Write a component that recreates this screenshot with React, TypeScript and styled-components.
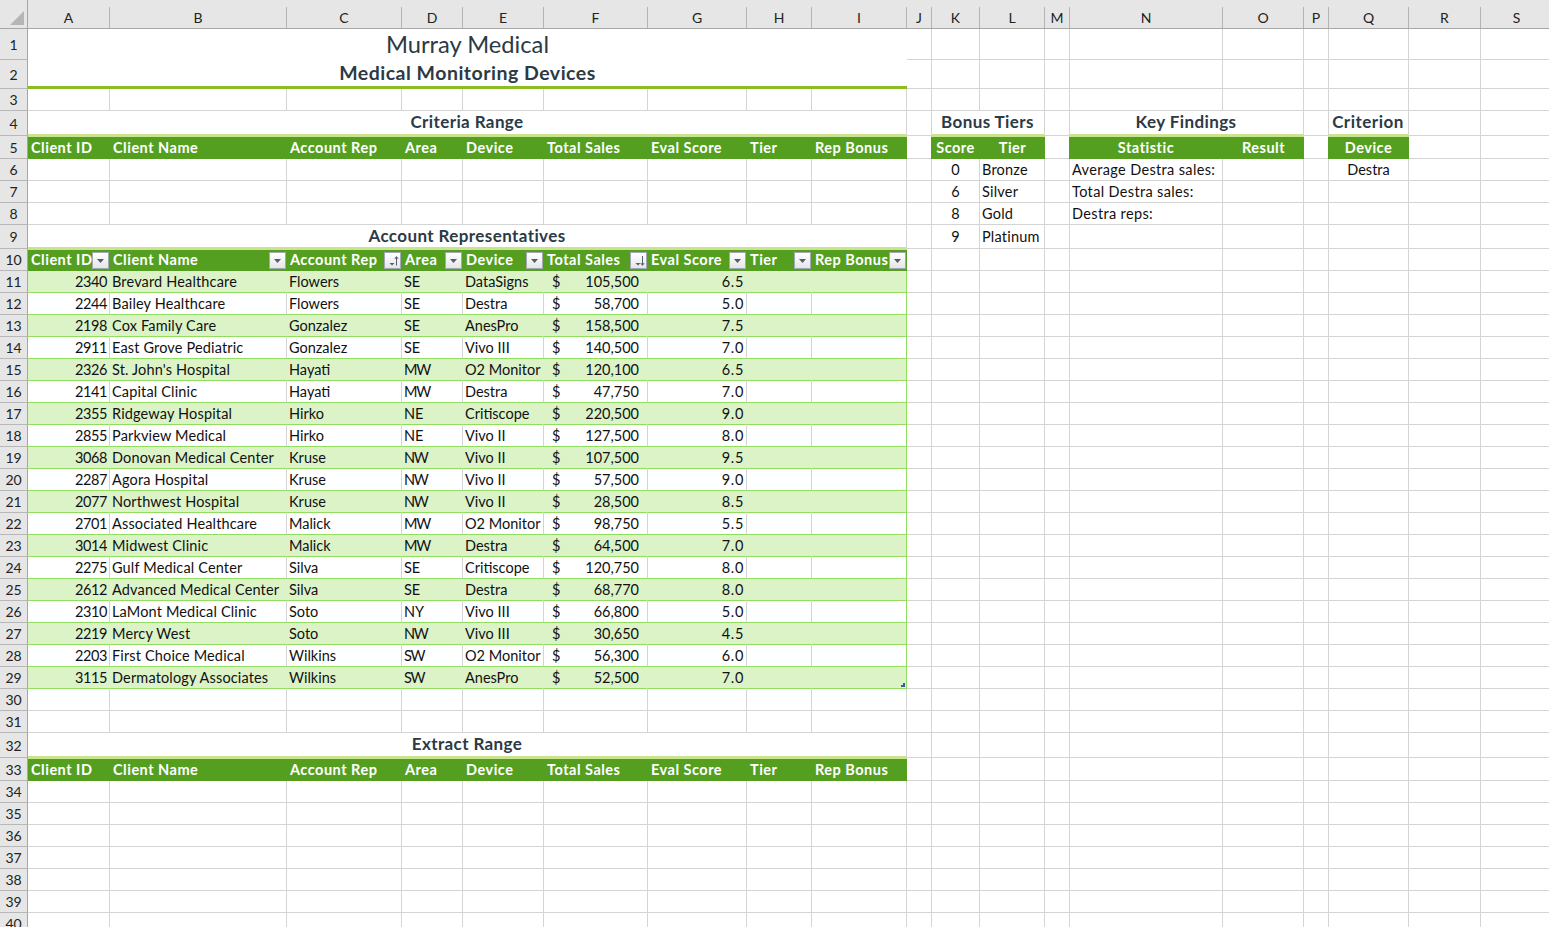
import React from "react";
import styled, { createGlobalStyle } from "styled-components";

const FONT = `"Lato", "Noto Sans", "Liberation Sans", sans-serif`;
const widths = [28, 82, 177, 115, 61, 81, 104, 99, 65, 95, 25, 48, 65, 25, 153, 81, 25, 80, 72, 72];
const letters = "ABCDEFGHIJKLMNOPQRS".split("");
const heights: Record<number, number> = { 1: 31, 2: 29, 3: 22, 4: 25, 5: 23, 9: 24, 10: 22, 32: 25, 33: 23 };
const rowCount = 40;
const GRID = "#d4d4d4";
const SOFT_RULE = "#c9e48c";

const Global = createGlobalStyle`
  html, body { margin: 0; padding: 0; background: #fff; overflow: hidden; }
  #root { width: 1549px; height: 927px; overflow: hidden; }
`;

const Sheet = styled.div`
  display: grid;
  grid-template-columns: ${widths.map((w) => `${w}px`).join(" ")};
  grid-template-rows: 29px ${Array.from({ length: rowCount }, (_, i) => `${heights[i + 1] ?? 22}px`).join(" ")};
  font-family: ${FONT};
  font-size: 14.5px;
  color: #111;
  width: 1549px;
  height: 927px;
  overflow: hidden;
`;

const Corner = styled.div`
  position: relative;
  background: #e6e6e6;
  border-right: 1px solid #a6a6a6;
  border-bottom: 1px solid #a6a6a6;
  box-sizing: border-box;
  svg { position: absolute; left: 10px; top: 11px; }
`;

const ColHead = styled.div`
  background: #e6e6e6;
  border-bottom: 1px solid #a6a6a6;
  box-sizing: border-box;
  padding-top: 7px;
  text-align: center;
  font-size: 14px;
  line-height: 21px;
  color: #222;
  & > span {
    display: block;
    border-right: 1px solid #b4b4b4;
    height: 21px;
  }
`;

const RowHead = styled.div`
  background: #e6e6e6;
  border-right: 1px solid #a6a6a6;
  border-bottom: 1px solid #b8b8b8;
  box-sizing: border-box;
  display: flex;
  align-items: center;
  justify-content: center;
  font-size: 14px;
  color: #222;
`;

const Cell = styled.div<{ $center?: boolean; $spacing?: number }>`
  position: relative;
  box-sizing: border-box;
  display: flex;
  align-items: center;
  justify-content: ${(p) => (p.$center ? "center" : "flex-start")};
  padding: 0 2px;
  white-space: nowrap;
  overflow: hidden;
  letter-spacing: ${(p) => p.$spacing ?? 0}px;
  border-right: 1px solid ${GRID};
  border-bottom: 1px solid ${GRID};
  background: #fff;
`;

const Title = styled.div<{ $span: number; $size: number; $weight?: number; $rule?: string; $ruleH?: number; $grid?: boolean; $bleed?: boolean; $spacing?: number; $lift?: number }>`
  grid-column: span ${(p) => p.$span};
  box-sizing: border-box;
  display: flex;
  align-items: center;
  justify-content: center;
  white-space: nowrap;
  padding-bottom: ${(p) => p.$lift ?? 2}px;
  margin-left: ${(p) => (p.$bleed ? -1 : 0)}px;
  font-size: ${(p) => p.$size}px;
  font-weight: ${(p) => p.$weight ?? 700};
  letter-spacing: ${(p) => p.$spacing ?? 0.4}px;
  color: #2b3a44;
  border-bottom: ${(p) => p.$ruleH ?? 0}px solid ${(p) => p.$rule ?? "transparent"};
  border-right: ${(p) => (p.$grid ? `1px solid ${GRID}` : "0")};
`;

const HeadCell = styled.div<{ $center?: boolean; $bleed?: boolean }>`
  position: relative;
  box-sizing: border-box;
  background: #559f20;
  color: #fff;
  font-weight: 700;
  letter-spacing: 0.5px;
  display: flex;
  align-items: center;
  justify-content: ${(p) => (p.$center ? "center" : "flex-start")};
  padding: 0 3px 2px;
  white-space: nowrap;
  border-top: 1px solid ${SOFT_RULE};
  margin-left: ${(p) => (p.$bleed ? -1 : 0)}px;
`;

const FilterBtn = styled.span`
  position: absolute;
  right: 1px;
  top: 2px;
  width: 17px;
  height: 17px;
  box-sizing: border-box;
  background: linear-gradient(#ffffff, #e4e6ea);
  border: 1px solid #a4a8b4;
  display: flex;
  align-items: center;
  justify-content: center;
`;

const DataCell = styled.div<{ $band: boolean; $last?: boolean; $right?: boolean; $pr?: number; $spacing?: number }>`
  position: relative;
  box-sizing: border-box;
  display: flex;
  align-items: center;
  justify-content: ${(p) => (p.$right ? "flex-end" : "flex-start")};
  padding: 0 ${(p) => p.$pr ?? 2}px 0 2px;
  white-space: nowrap;
  overflow: hidden;
  letter-spacing: ${(p) => p.$spacing ?? 0}px;
  background: ${(p) => (p.$band ? "#dcf3c8" : "#fff")};
  border-bottom: 1px solid #90dd60;
  border-right: 1px solid ${(p) => (p.$last ? "#90dd60" : p.$band ? "transparent" : GRID)};
`;

const Money = styled.span`
  position: absolute;
  left: 8px;
`;

const Handle = styled.span`
  position: absolute;
  right: 1px;
  bottom: 1px;
  width: 4px;
  height: 4px;
  background: #3f58a8;
  clip-path: polygon(100% 0, 100% 100%, 0 100%, 0 50%, 50% 50%, 50% 0);
`;

const Arrow = () => (
  <svg width="9" height="6" viewBox="0 0 9 6"><path d="M1 1h7L4.5 5z" fill="#555e68" /></svg>
);
const SortDown = () => (
  <svg width="12" height="12" viewBox="0 0 12 12">
    <path d="M2.5 8h5L5 10.5z" fill="#555e68" />
    <path d="M9.5 1v9M7.8 8l1.7 2.4L11.2 8" fill="none" stroke="#555e68" strokeWidth="1" />
  </svg>
);
const SortUp = () => (
  <svg width="12" height="12" viewBox="0 0 12 12">
    <path d="M2.5 8h5L5 10.5z" fill="#555e68" />
    <path d="M9.5 10.5V2M7.8 4L9.5 1.6 11.2 4" fill="none" stroke="#555e68" strokeWidth="1" />
  </svg>
);

const columns = ["Client ID", "Client Name", "Account Rep", "Area", "Device", "Total Sales", "Eval Score", "Tier", "Rep Bonus"];
const data: [number, string, string, string, string, string, string][] = [
  [2340, "Brevard Healthcare", "Flowers", "SE", "DataSigns", "105,500", "6.5"],
  [2244, "Bailey Healthcare", "Flowers", "SE", "Destra", "58,700", "5.0"],
  [2198, "Cox Family Care", "Gonzalez", "SE", "AnesPro", "158,500", "7.5"],
  [2911, "East Grove Pediatric", "Gonzalez", "SE", "Vivo III", "140,500", "7.0"],
  [2326, "St. John's Hospital", "Hayati", "MW", "O2 Monitor", "120,100", "6.5"],
  [2141, "Capital Clinic", "Hayati", "MW", "Destra", "47,750", "7.0"],
  [2355, "Ridgeway Hospital", "Hirko", "NE", "Critiscope", "220,500", "9.0"],
  [2855, "Parkview Medical", "Hirko", "NE", "Vivo II", "127,500", "8.0"],
  [3068, "Donovan Medical Center", "Kruse", "NW", "Vivo II", "107,500", "9.5"],
  [2287, "Agora Hospital", "Kruse", "NW", "Vivo II", "57,500", "9.0"],
  [2077, "Northwest Hospital", "Kruse", "NW", "Vivo II", "28,500", "8.5"],
  [2701, "Associated Healthcare", "Malick", "MW", "O2 Monitor", "98,750", "5.5"],
  [3014, "Midwest Clinic", "Malick", "MW", "Destra", "64,500", "7.0"],
  [2275, "Gulf Medical Center", "Silva", "SE", "Critiscope", "120,750", "8.0"],
  [2612, "Advanced Medical Center", "Silva", "SE", "Destra", "68,770", "8.0"],
  [2310, "LaMont Medical Clinic", "Soto", "NY", "Vivo III", "66,800", "5.0"],
  [2219, "Mercy West", "Soto", "NW", "Vivo III", "30,650", "4.5"],
  [2203, "First Choice Medical", "Wilkins", "SW", "O2 Monitor", "56,300", "6.0"],
  [3115, "Dermatology Associates", "Wilkins", "SW", "AnesPro", "52,500", "7.0"],
];

const blanks = (n: number, prefix: string) =>
  Array.from({ length: n }, (_, i) => <Cell key={`${prefix}${i}`} />);

const sideBlanks = (prefix: string) => blanks(10, prefix);

function sideRow(r: number): React.ReactNode {
  const bonus: Record<number, [string, string]> = { 6: ["0", "Bronze"], 7: ["6", "Silver"], 8: ["8", "Gold"], 9: ["9", "Platinum"] };
  const finding: Record<number, string> = { 6: "Average Destra sales:", 7: "Total Destra sales:", 8: "Destra reps:" };
  return (
    <>
      <Cell />
      <Cell $center>{bonus[r][0]}</Cell>
      <Cell $spacing={0.2}>{bonus[r][1]}</Cell>
      <Cell />
      <Cell $spacing={0.35}>{finding[r] ?? ""}</Cell>
      <Cell />
      <Cell />
      <Cell $center>{r === 6 ? "Destra" : ""}</Cell>
      <Cell />
      <Cell />
    </>
  );
}

const HeaderRow = ({ filters }: { filters?: boolean }) => (
  <>
    {columns.map((c) => (
      <HeadCell key={c}>
        {c}
        {filters && (
          <FilterBtn>
            {c === "Account Rep" ? <SortUp /> : c === "Total Sales" ? <SortDown /> : <Arrow />}
          </FilterBtn>
        )}
      </HeadCell>
    ))}
  </>
);

function renderRow(r: number): React.ReactNode {
  if (r === 1)
    return (
      <>
        <Title $span={9} $size={23.7} $weight={400} $spacing={0}>Murray Medical</Title>
        {sideBlanks("a")}
      </>
    );
  if (r === 2)
    return (
      <>
        <Title $span={9} $size={19.5} $spacing={0.5} $rule="#8cbc22" $ruleH={3}>Medical Monitoring Devices</Title>
        {sideBlanks("b")}
      </>
    );
  if (r === 4)
    return (
      <>
        <Title $span={9} $size={17} $rule={SOFT_RULE} $ruleH={2} $grid>Criteria Range</Title>
        <Cell />
        <Title $span={2} $size={17} $rule={SOFT_RULE} $ruleH={2} $grid $bleed>Bonus Tiers</Title>
        <Cell />
        <Title $span={2} $size={17} $rule={SOFT_RULE} $ruleH={2} $grid $bleed>Key Findings</Title>
        <Cell />
        <Title $span={1} $size={17} $spacing={0.5} $rule={SOFT_RULE} $ruleH={2} $grid $bleed>Criterion</Title>
        <Cell />
        <Cell />
      </>
    );
  if (r === 5)
    return (
      <>
        <HeaderRow />
        <Cell />
        <HeadCell $center $bleed>Score</HeadCell>
        <HeadCell $center>Tier</HeadCell>
        <Cell />
        <HeadCell $center $bleed>Statistic</HeadCell>
        <HeadCell $center>Result</HeadCell>
        <Cell />
        <HeadCell $center $bleed>Device</HeadCell>
        <Cell />
        <Cell />
      </>
    );
  if (r >= 6 && r <= 8)
    return (
      <>
        {blanks(9, `m${r}`)}
        {sideRow(r)}
      </>
    );
  if (r === 9)
    return (
      <>
        <Title $span={9} $size={17} $rule={SOFT_RULE} $ruleH={2} $grid>Account Representatives</Title>
        {sideRow(9)}
      </>
    );
  if (r === 10)
    return (
      <>
        <HeaderRow filters />
        {sideBlanks("h")}
      </>
    );
  if (r >= 11 && r <= 29) {
    const d = data[r - 11];
    const band = r % 2 === 1;
    return (
      <>
        <DataCell $band={band} $right $spacing={-0.4}>{d[0]}</DataCell>
        <DataCell $band={band} $spacing={0.15}>{d[1]}</DataCell>
        <DataCell $band={band}>{d[2]}</DataCell>
        <DataCell $band={band} $spacing={d[3].includes("W") ? -1.2 : 0}>{d[3]}</DataCell>
        <DataCell $band={band}>{d[4]}</DataCell>
        <DataCell $band={band} $right $pr={8}><Money>$</Money>{d[5]}</DataCell>
        <DataCell $band={band} $right $spacing={0.7}>{d[6]}</DataCell>
        <DataCell $band={band} />
        <DataCell $band={band} $last>{r === 29 && <Handle />}</DataCell>
        {sideBlanks(`s${r}`)}
      </>
    );
  }
  if (r === 32)
    return (
      <>
        <Title $span={9} $size={17} $rule={SOFT_RULE} $ruleH={2} $grid>Extract Range</Title>
        {sideBlanks("x")}
      </>
    );
  if (r === 33)
    return (
      <>
        <HeaderRow />
        {sideBlanks("y")}
      </>
    );
  return blanks(19, `e${r}`);
}

export default function App() {
  return (
    <>
      <Global />
      <Sheet>
        <Corner>
          <svg width="14" height="14" viewBox="0 0 14 14"><path d="M14 0v14H0z" fill="#b5b5b5" /></svg>
        </Corner>
        {letters.map((l) => (
          <ColHead key={l}><span>{l}</span></ColHead>
        ))}
        {Array.from({ length: rowCount }, (_, i) => (
          <React.Fragment key={i}>
            <RowHead>{i + 1}</RowHead>
            {renderRow(i + 1)}
          </React.Fragment>
        ))}
      </Sheet>
    </>
  );
}
